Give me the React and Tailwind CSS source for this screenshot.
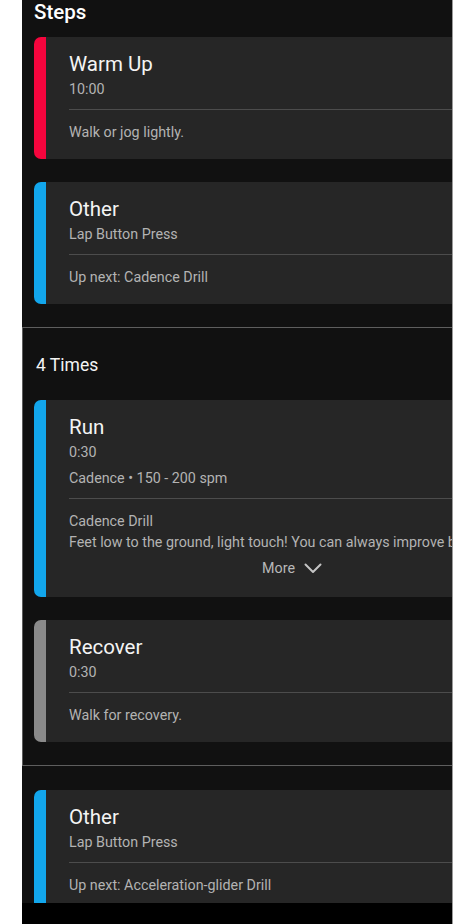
const steps = [
  { title: 'Warm Up', lines: ['10:00'], notes: ['Walk or jog lightly.'], color: 'bg-[#f5053d]' },
  { title: 'Other', lines: ['Lap Button Press'], notes: ['Up next: Cadence Drill'], color: 'bg-[#12a6ec]' },
];

const repeatSteps = [
  {
    title: 'Run',
    lines: ['0:30', 'Cadence • 150 - 200 spm'],
    notes: ['Cadence Drill', 'Feet low to the ground, light touch! You can always improve by doing more drills.'],
    color: 'bg-[#12a6ec]',
    more: true,
  },
  { title: 'Recover', lines: ['0:30'], notes: ['Walk for recovery.'], color: 'bg-[#8a8a8a]' },
];

const Chevron = () => (
  <svg width="18" height="11" viewBox="0 0 18 11" fill="none" className="ml-[9px]">
    <path d="M1.5 1.5 L9 9 L16.5 1.5" stroke="#c4c4c4" strokeWidth="2" strokeLinecap="round" strokeLinejoin="round" />
  </svg>
);

const StepCard = ({ step }) => (
  <div className="flex w-[504px] ml-[12px] shrink-0">
    <div className={`w-[12px] rounded-l-[7px] shrink-0 ${step.color}`}></div>
    <div className="flex-1 min-w-0 bg-[#262626] pl-[23px] pr-[23px] pt-[14px] pb-[16px]">
      <p className="text-[20.5px] leading-[26px] text-[#f4f4f4]">{step.title}</p>
      {step.lines.map((l, i) => (
        <p key={i} className={`text-[14.3px] leading-[20px] text-[#b3b3b3] ${i > 0 ? 'mt-[6px]' : 'mt-[2px]'}`}>
          {l}
        </p>
      ))}
      <div className="h-px bg-[#4c4c4c] mt-[10px] mr-[-23px]"></div>
      <div className="mt-[12px]">
        {step.notes.map((n, i) => (
          <p key={i} className="text-[14.3px] leading-[21px] text-[#b3b3b3] whitespace-nowrap overflow-hidden">
            {n}
          </p>
        ))}
      </div>
      {step.more && (
        <div className="flex items-center justify-center mt-[5px] h-[20px]">
          <span className="text-[14.3px] leading-[20px] text-[#b8b8b8]">More</span>
          <Chevron />
        </div>
      )}
      {step.more && <div className="h-[3px]"></div>}
    </div>
  </div>
);

export default function App() {
  return (
    <div className="min-h-screen bg-white" style={{ fontFamily: 'Roboto, "Noto Sans", sans-serif' }}>
      <div className="ml-[22px] w-[431px] h-[924px] flex flex-col bg-[#111111] border-r border-[#9a9a9a] overflow-hidden">
        <div className="flex-1 overflow-hidden">
          <h1 className="text-[20.5px] leading-[24px] font-medium text-white pl-[12px]">Steps</h1>
          <div className="mt-[13px] flex flex-col gap-[23px]">
            {steps.map((s, i) => (
              <StepCard key={i} step={s} />
            ))}
          </div>

          {/* Repeat block */}
          <div className="mt-[23px] border-t border-b border-l border-[#5e5e5e] pb-[23px]">
            <p className="text-[17.5px] leading-[24px] text-[#f4f4f4] pt-[25px] pl-[13px]">4 Times</p>
            <div className="mt-[23px] flex flex-col gap-[23px] ml-[-1px]">
              {repeatSteps.map((s, i) => (
                <StepCard key={i} step={s} />
              ))}
            </div>
          </div>

          <div className="mt-[24px]">
            <StepCard
              step={{
                title: 'Other',
                lines: ['Lap Button Press'],
                notes: ['Up next: Acceleration-glider Drill'],
                color: 'bg-[#12a6ec]',
              }}
            />
          </div>
        </div>
        <div className="h-[21px] bg-black shrink-0"></div>
      </div>
    </div>
  );
}
